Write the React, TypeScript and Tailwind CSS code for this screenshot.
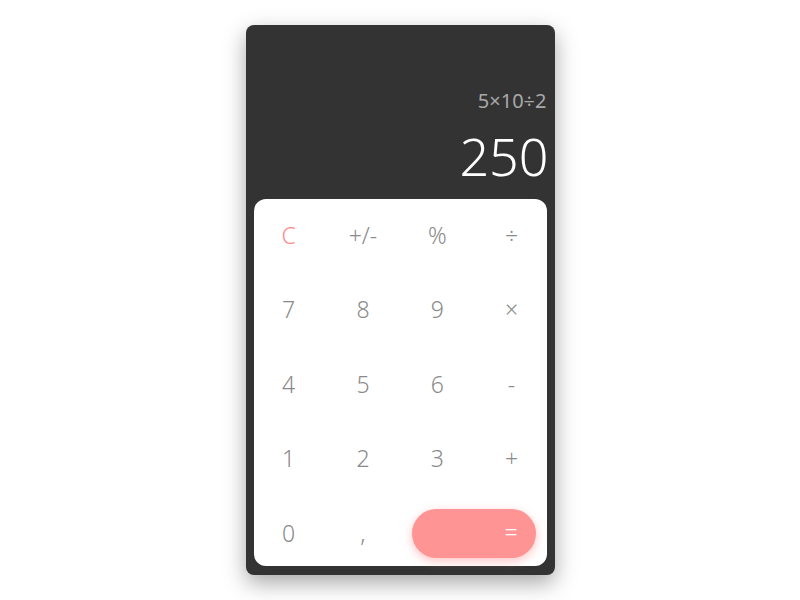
import React from 'react';

type Key = { label: string; tone?: 'accent' };

const keys: Key[] = [
  { label: 'C', tone: 'accent' },
  { label: '+/-' },
  { label: '%' },
  { label: '÷' },
  { label: '7' },
  { label: '8' },
  { label: '9' },
  { label: '×' },
  { label: '4' },
  { label: '5' },
  { label: '6' },
  { label: '-' },
  { label: '1' },
  { label: '2' },
  { label: '3' },
  { label: '+' },
  { label: '0' },
  { label: ',' },
];

export default function App() {
  return (
    <div
      className="w-[800px] h-[600px] bg-white flex items-center justify-center"
      style={{ fontFamily: '"Noto Sans", "Open Sans", sans-serif' }}
    >
      <div className="w-[309px] h-[550px] bg-[#333333] rounded-[8px] flex flex-col px-2 pb-[9px] shadow-[0_8px_22px_rgba(0,0,0,0.35)]">
        {/* display */}
        <div className="h-[174px] flex flex-col items-end justify-end pb-[17px]">
          <div className="text-[20px] leading-none text-[#a8a8a8] mb-[19px]">5×10÷2</div>
          <div className="text-[52px] leading-none text-white font-light -mr-[2px]">250</div>
        </div>

        {/* keypad */}
        <div className="h-[367px] bg-white rounded-[12px]">
          <div className="-ml-[2px] grid grid-cols-[repeat(4,74.3px)] grid-rows-[repeat(5,74.5px)]">
            {keys.map((k) => (
              <button
                key={k.label}
                className={`flex items-center justify-center pb-[3px] text-[23px] font-light ${
                  k.tone === 'accent' ? 'text-[#ff8c8c]' : 'text-[#8a8a8a]'
                }`}
              >
                {k.label}
              </button>
            ))}
            <div className="col-span-2 flex items-start pt-[12px] pl-[12px] pr-[13px]">
              <button className="w-full h-[49px] rounded-full bg-[#ff9494] text-white text-[23px] font-light flex items-center justify-end pr-[18px] pb-[3px] shadow-[0_3px_10px_rgba(255,148,148,0.55)]">
                =
              </button>
            </div>
          </div>
        </div>
      </div>
    </div>
  );
}
